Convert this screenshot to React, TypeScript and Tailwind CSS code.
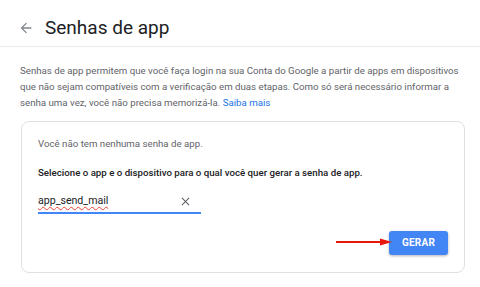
export default function App() {
  return (
    <div className="w-[480px] h-[287px] bg-white overflow-hidden" style={{ fontFamily: "Roboto, 'Liberation Sans', sans-serif" }}>
      {/* Header */}
      <div className="h-[47px] border-b border-[#e8eaed] flex items-center pl-[18px]">
        <svg width="16" height="16" viewBox="0 0 24 24" className="text-[#80868b] mt-[9px]">
          <path fill="currentColor" d="M20 11H7.83l5.59-5.59L12 4l-8 8 8 8 1.41-1.41L7.83 13H20v-2z" />
        </svg>
        <h1 className="ml-[11px] mt-[9px] text-[19px] leading-none text-[#202124]">Senhas de app</h1>
      </div>

      {/* Description */}
      <p className="px-[20px] pt-[16px] text-[9.7px] leading-[16px] text-[#5f6368]">
        Senhas de app permitem que você faça login na sua Conta do Google a partir de apps em dispositivos que não sejam compatíveis com a verificação em duas etapas. Como só será necessário informar a senha uma vez, você não precisa memorizá-la. <a className="text-[#1a73e8]">Saiba mais</a>
      </p>

      {/* Card */}
      <div className="mx-[21px] mt-[10px] w-[444px] h-[152px] border border-[#e0e0e0] rounded-[8px] px-[16px] pt-[14px] flex flex-col">
        <p className="text-[9.7px] leading-[16px] text-[#5f6368]">Você não tem nenhuma senha de app.</p>
        <p className="mt-[13px] text-[9.7px] leading-[16px] font-medium text-[#202124]">
          Selecione o app e o dispositivo para o qual você quer gerar a senha de app.
        </p>
        <div className="mt-[9px] w-[163px] flex items-center border-b-2 border-[#4285f4] h-[24px]">
          <span className="flex-1 text-[10.6px] text-[#202124] underline decoration-wavy decoration-[#ea4335] decoration-1 underline-offset-2">app_send_mail</span>
          <svg width="9" height="9" viewBox="0 0 10 10" className="mr-[11px]">
            <path d="M1 1L9 9M9 1L1 9" stroke="#5f6368" strokeWidth="1.2" />
          </svg>
        </div>
        <div className="flex-1 flex items-start justify-end pt-[15px]">
          <div className="relative">
            <svg width="56" height="8" viewBox="0 0 56 8" className="absolute right-[100%] top-[9px] -mr-[3px]">
              <path d="M0 4 L46 4" stroke="#e8170d" strokeWidth="2" />
              <path d="M44 0.5 L56 4 L44 7.5 Z" fill="#e8170d" />
            </svg>
            <button className="w-[59px] h-[24px] rounded-[3px] bg-[#4285f4] text-white text-[10px] font-bold tracking-wide shadow-[0_1px_3px_rgba(0,0,0,0.3)]">
              GERAR
            </button>
          </div>
        </div>
      </div>
    </div>
  )
}
